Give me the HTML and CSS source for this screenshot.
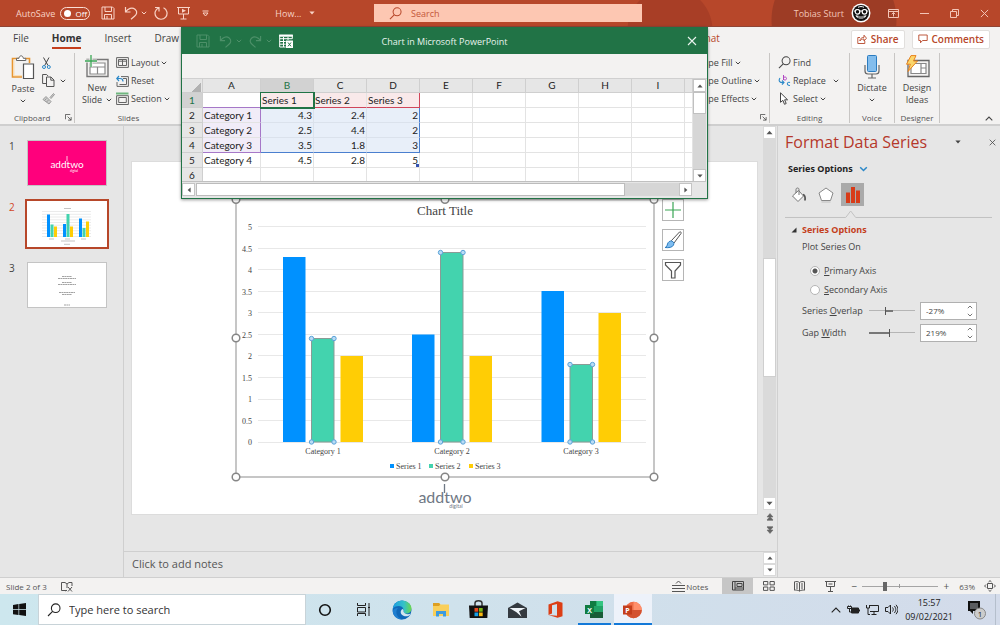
FILE: index.html
```html
<!DOCTYPE html>
<html lang="en">
<head>
<meta charset="utf-8">
<title>PowerPoint</title>
<link rel="stylesheet" href="styles.css">
</head>
<body>
<svg class="defs" aria-hidden="true">
  <symbol id="chev" viewBox="0 0 6 4"><path d="M.8.8 3 3 5.2.8" fill="none" stroke="currentColor"/></symbol>
  <symbol id="tri" viewBox="0 0 6 4"><path d="M.4.4h5.2L3 3.4z" fill="currentColor"/></symbol>
  <symbol id="save" viewBox="0 0 14 14"><path d="M1 1h10.500L13 2.500V13H1zM4 1v4.500h6.500V1M3.500 13V8.500h7V13M6 10v3" fill="none" stroke="currentColor"/></symbol>
  <symbol id="undo" viewBox="0 0 14 14"><path d="M1.500 1v5h5M1.500 6C4 2.500 8 .8 11 3.200c3 2.600 1.500 5.300-.5 7L7 13.300" fill="none" stroke="currentColor" stroke-width="1.200"/></symbol>
  <symbol id="launch" viewBox="0 0 8 8"><path d="M.5 6V.5H6M3 3l4 4M7 3.500V7H3.500" fill="none" stroke="currentColor"/></symbol>
  <symbol id="lens" viewBox="0 0 14 14"><path d="M5.600 8.400 1 13" stroke="currentColor" stroke-width="1.100"/><circle cx="8.700" cy="5.200" r="4.300" fill="none" stroke="currentColor" stroke-width="1.100"/></symbol>
  <symbol id="cross" viewBox="0 0 10 10"><path d="m1 1 8 8M9 1 1 9" stroke="currentColor" stroke-width="1.100"/></symbol>
</svg>
<div class="app">
  <header class="titlebar">
    <div class="tb-left">
      <span class="autosave">AutoSave</span>
      <button class="toggle" aria-label="AutoSave off"><i></i>Off</button>
      <button class="tb-save" aria-label="Save"><svg width="14" height="14"><use href="#save"/></svg></button>
      <button class="tb-undo" aria-label="Undo"><svg width="14" height="14"><use href="#undo"/></svg><svg width="6" height="4"><use href="#chev"/></svg></button>
      <button class="tb-redo" aria-label="Repeat"><svg width="14" height="14" viewBox="0 0 14 14"><path d="M1 1.500h4v4M4.800 1.700A6 6 0 1 0 9.500 1.800" fill="none" stroke="currentColor" stroke-width="1.200"/></svg></button>
      <button class="tb-show" aria-label="Start slide show"><svg width="13" height="14" viewBox="0 0 13 14"><path d="M0 1.500h13M1.500 1.500V8h10V1.500M6.500 8v5M3.500 13h6" fill="none" stroke="currentColor"/><path d="m5 2.800 4 2-4 2z" fill="currentColor"/></svg></button>
      <button class="tb-more" aria-label="Customise toolbar"><svg width="7" height="7" viewBox="0 0 7 7"><path d="M.5 1h6M1 3h5L3.500 6z" fill="none" stroke="currentColor"/></svg></button>
      <span class="docname">How... <svg width="6" height="4"><use href="#tri"/></svg></span>
    </div>
    <label class="search"><svg width="13" height="13"><use href="#lens"/></svg><input type="search" placeholder="Search" aria-label="Search"></label>
    <div class="tb-right">
      <span>Tobias Sturt</span>
      <svg width="20" height="20" viewBox="0 0 20 20"><circle cx="10" cy="10" r="9.500" fill="#fff"/><circle cx="10" cy="10" r="8" fill="#111"/><path d="M3.500 8.500C4 6 8 6 9 8h2c1-2 5-2 5.500.5" stroke="#fff" fill="none"/><circle cx="6.500" cy="8.800" r="2.300" fill="#111" stroke="#fff" stroke-width="1.200"/><circle cx="13.500" cy="8.800" r="2.300" fill="#111" stroke="#fff" stroke-width="1.200"/><path d="M4.500 12c3 1.500 8 1.500 11 0-1 5-10 5-11 0z" fill="#fff"/><path d="M6.500 14h7M8 12.800v2.800M10 13v3M12 12.800v2.800" stroke="#111" stroke-width=".6"/><path d="M7 4.300c2-1 4-1 6 0" stroke="#fff" fill="none"/></svg>
      <button aria-label="Ribbon display options"><svg width="11" height="9" viewBox="0 0 11 9"><path d="M.5.500h10v8H.5zM.5 2.500h10M5.500 7.500v-4M3.700 5.200l1.800-1.700 1.800 1.700" fill="none" stroke="currentColor"/></svg></button>
      <button aria-label="Minimise"><svg width="9" height="9" viewBox="0 0 9 9"><path d="M0 4.500h9" stroke="currentColor"/></svg></button>
      <button aria-label="Restore"><svg width="9" height="9" viewBox="0 0 9 9"><path d="M.5 2.500h6v6h-6zM2.500 2V.5h6v6H7" fill="none" stroke="currentColor"/></svg></button>
      <button aria-label="Close"><svg width="9" height="9"><use href="#cross"/></svg></button>
    </div>
  </header>

  <div class="ribbon">
    <nav class="tabs">
      <button>File</button><button class="on">Home</button><button>Insert</button><button>Draw</button>
      <button class="ctx">Format</button>
      <button class="pill"><svg width="10" height="10" viewBox="0 0 10 10"><path d="M3 3.500H.8v6h7V7M2.800 7c.3-2.500 2-3.700 4.200-3.700V1.200l2.500 3L7 7V5C5.200 5 4 5.500 2.800 7z" fill="none" stroke="currentColor" stroke-width=".9"/></svg>Share</button>
      <button class="pill"><svg width="10" height="10" viewBox="0 0 10 10"><path d="M.8 1h8.400v5.500H4.500l-2 2.300V6.500H.8z" fill="none" stroke="currentColor" stroke-width=".9"/></svg>Comments</button>
    </nav>
    <div class="groups">
      <section class="group g-clip">
        <div class="gbody">
          <button class="big"><svg width="24" height="25" viewBox="0 0 24 25"><path d="M8 3.500H1.500V22H11" fill="none" stroke="#e8952f" stroke-width="1.600"/><path d="M3 5v15.500h8" fill="none" stroke="#fce0b5"/><path d="M14 3.500h4.500V8" fill="none" stroke="#e8952f" stroke-width="1.600"/><path d="M5.500 5.500V3.300H8C8.300 0 12 0 12.300 3.300h2.500v2.200z" fill="#fff" stroke="#666"/><path d="M12.500 9h10v14.500h-10z" fill="#fff" stroke="#555" stroke-width="1.200"/></svg>Paste<svg class="dd" width="6" height="4"><use href="#chev"/></svg></button>
          <div class="col minis">
            <button aria-label="Cut"><svg width="9" height="12" viewBox="0 0 9 12"><path d="M1.500.5 6 8.500M7 .5 2.700 8.500" stroke="#444"/><circle cx="2" cy="10" r="1.500" fill="none" stroke="#2b88c8"/><circle cx="6.800" cy="10" r="1.500" fill="none" stroke="#2b88c8"/></svg></button>
            <button aria-label="Copy"><svg width="13" height="13" viewBox="0 0 13 13"><path d="M4 9.500H.6v-9h4l1.500 1.500M4.500 3h4.500l3 3v6.500H4.500zM8.800 3v3.200H12" fill="none" stroke="#555"/></svg><svg class="dd" width="6" height="4"><use href="#chev"/></svg></button>
            <button aria-label="Format painter"><svg width="13" height="12" viewBox="0 0 13 12"><path d="m8 4.500 3.500-4 1 1-3.500 4zM4 3.500l5 5-2 2.500L1 6.500zM2.500 7.500l2-2M4.500 9l2-2" fill="#ccc" stroke="#999"/></svg></button>
          </div>
        </div>
        <div class="glabel">Clipboard<svg width="7" height="7"><use href="#launch"/></svg></div>
      </section>
      <section class="group g-slides">
        <div class="gbody">
          <button class="big"><svg width="24" height="24" viewBox="0 0 24 24"><path d="M2 4.500h21v17H2z" fill="#f3f2f1" stroke="#777" stroke-width="1.400"/><path d="M5 8h15v11H5zM12.500 12v7M5 12h15" fill="#fff" stroke="#8a8a8a" stroke-width="1.200"/><path d="M6 0v12M0 6h12" stroke="#f3f2f1" stroke-width="3"/><path d="M6 0v12M0 6h12" stroke="#3aa655" stroke-width="1.300"/></svg>New<span>Slide <svg width="6" height="4"><use href="#chev"/></svg></span></button>
          <div class="col">
            <button><svg width="13" height="11" viewBox="0 0 13 11"><path d="M.6.600h11.800v9.800H.6zM2.500 2.500h8v6h-8zM6.500 2.500v6M2.500 4.200h8" fill="none" stroke="#666"/></svg>Layout <svg width="6" height="4"><use href="#chev"/></svg></button>
            <button><svg width="13" height="12" viewBox="0 0 13 12"><path d="M5 1.600h7.400v9.800H1V7M3.500 9.500h7v-6H7" fill="none" stroke="#666"/><path d="M1 3.500h3c2 0 3 1 3 3M3 1 .8 3.500 3 6" fill="none" stroke="#2b88c8" stroke-width="1.200"/></svg>Reset</button>
            <button><svg width="13" height="13" viewBox="0 0 13 13"><path d="M0 .500h12.500v2H0z" fill="#6fb67f"/><path d="M.6 3.700h11.800v8.800H.6zM2.700 5.500h7.600v5H2.700z" fill="none" stroke="#666"/></svg>Section <svg width="6" height="4"><use href="#chev"/></svg></button>
          </div>
        </div>
        <div class="glabel">Slides</div>
      </section>
      <section class="group g-draw">
        <div class="gbody"><div class="col">
          <button>Shape Fill <svg width="6" height="4"><use href="#chev"/></svg></button>
          <button>Shape Outline <svg width="6" height="4"><use href="#chev"/></svg></button>
          <button>Shape Effects <svg width="6" height="4"><use href="#chev"/></svg></button>
        </div></div>
        <div class="glabel"><svg width="7" height="7"><use href="#launch"/></svg></div>
      </section>
      <section class="group g-edit">
        <div class="gbody"><div class="col">
          <button><svg width="13" height="13"><use href="#lens"/></svg>Find</button>
          <button><svg width="13" height="13" viewBox="0 0 13 13"><path d="M5.500 1v5M5.500 4.500c0-2 3-2 3 0s-3 2-3 0" fill="none" stroke="#b146c2"/><path d="M12 8.500c-3-1.500-4 3.300 0 3M2 4C0 7 2 9 5.500 8.500M4 6.500l2 2-2 2.200" fill="none" stroke="#2b88c8" stroke-width="1.100"/></svg>Replace <svg class="far" width="6" height="4"><use href="#chev"/></svg></button>
          <button><svg width="13" height="13" viewBox="0 0 13 13"><path d="M2.500.800v9.500l2.400-2 1.600 4 1.700-.8-1.600-3.700h3z" fill="#fff" stroke="#444"/></svg>Select <svg width="6" height="4"><use href="#chev"/></svg></button>
        </div></div>
        <div class="glabel">Editing</div>
      </section>
      <section class="group g-voice">
        <div class="gbody"><button class="big"><svg width="16" height="24" viewBox="0 0 16 24"><path d="M1 10v6c0 2 1 3 3 3h8c2 0 3-1 3-3v-6M8 19v4M4 23h8" fill="none" stroke="#666" stroke-width="1.200"/><rect x="3.500" y=".5" width="9" height="16" rx="1" fill="#83bdec" stroke="#2b7cc0"/></svg>Dictate<svg class="dd" width="6" height="4"><use href="#chev"/></svg></button></div>
        <div class="glabel">Voice</div>
      </section>
      <section class="group g-design">
        <div class="gbody"><button class="big"><svg width="25" height="24" viewBox="0 0 25 24"><path d="M3 5.500h21v16H3z" fill="#f3f2f1" stroke="#666" stroke-width="1.300"/><path d="M6 8.500h15v10H6zM16 8.500v10M16 13h5" fill="#fff" stroke="#888" stroke-width="1.200"/><path d="M6 .6h5L8.500 6h4L3 16.500l2.300-7.300H1.500z" fill="#fbd66b" stroke="#e8821e"/></svg>Design<span>Ideas</span></button></div>
        <div class="glabel">Designer</div>
      </section>
      <button class="collapse" aria-label="Collapse ribbon"><svg width="8" height="5" viewBox="0 0 8 5"><path d="m.7 4.300 3.300-3.300 3.300 3.300" fill="none" stroke="currentColor" stroke-width="1.100"/></svg></button>
    </div>
  </div>

  <main class="main">
    <aside class="thumbs">
      <div class="thumb"><span>1</span><svg viewBox="0 0 78 44"><rect width="78" height="44" fill="#ff007c"/><text x="39" y="27" class="mini-logo" text-anchor="middle">addtwo</text><path d="M39 15v5" stroke="#fff" stroke-width=".8"/><text x="46" y="31" class="mini-sub" text-anchor="middle">digital</text></svg></div>
      <div class="thumb sel"><span>2</span><svg viewBox="0 0 78 44"><rect width="78" height="44" fill="#fff"/><path d="M14 9.500h49M14 12.300h49M14 15h49M14 17.800h49M14 20.500h49M14 23.200h49M14 26h49M14 28.700h49M14 31.500h49M14 34.500h49" stroke="#ddd" stroke-width=".6"/><path d="M19 12.500h3V35h-3zM35 22h3v13h-3zM51 16.500h3V35h-3z" fill="#0091ff"/><path d="M22.500 22.500h3V35h-3zM38.500 12h3v23h-3zM54.500 26h3v9h-3z" fill="#43d3ae"/><path d="M26 24.500h3V35h-3zM42 24.500h3V35h-3zM58 19.500h3V35h-3z" fill="#ffcd05"/><path d="M36 6.500h7M21 37h5M37 37h5M53 37h5M33 39h14M36 42.300h6" stroke="#aaa" stroke-width=".7"/></svg></div>
      <div class="thumb"><span>3</span><svg viewBox="0 0 78 44"><rect width="78" height="44" fill="#fff"/><path d="M34 13.500h10M30 15.500h18M34 19.500h10M30 21.500h18M31 29.500h16M34 31.500h10M36 42h6" stroke="#999" stroke-width=".9" stroke-dasharray="2 .4"/></svg></div>
    </aside>
    <section class="editor">
      <div class="stage">
        <div class="slide">
          <svg class="chart" viewBox="132 162 625 352" role="img" aria-label="Clustered column chart">
            <path d="M236 199.500H654V477H236z" fill="none" stroke="#c6c6c6" stroke-width="2"/>
            <text x="445" y="215" text-anchor="middle" class="c-title">Chart Title</text>
            <path d="M258 226.500H646M258 248.500H646M258 269.500H646M258 291.500H646M258 312.500H646M258 334.500H646M258 355.500H646M258 377.500H646M258 399.500H646M258 420.500H646M258 442.500H646" stroke="#e8e8e8"/>
            <g class="c-axis" text-anchor="end"><text x="252" y="230">5</text><text x="252" y="252">4.5</text><text x="252" y="273">4</text><text x="252" y="295">3.5</text><text x="252" y="316">3</text><text x="252" y="338">2.5</text><text x="252" y="359">2</text><text x="252" y="381">1.5</text><text x="252" y="402">1</text><text x="252" y="424">0.5</text><text x="252" y="445">0</text></g>
            <g fill="#0091ff"><path d="M283 257h22.500v185H283zM412 334.500h22.500V442H412zM541.500 291h22.500v151h-22.500z"/></g>
            <g fill="#43d3ae" stroke="#8a9b96"><path d="M311.500 338.500H334V442h-22.500zM440.500 252.500H463V442h-22.500zM570 364.500h22.500V442H570z"/></g>
            <g fill="#ffcd05"><path d="M340.500 356H363v86h-22.500zM469.500 356H492v86h-22.500zM598.500 313H621v129h-22.500z"/></g>
            <g fill="#b8dcf5" stroke="#5ba3d9"><circle cx="311.500" cy="338.500" r="2.200"/><circle cx="334" cy="338.500" r="2.200"/><circle cx="311.500" cy="442" r="2.200"/><circle cx="334" cy="442" r="2.200"/><circle cx="440.500" cy="252.500" r="2.200"/><circle cx="463" cy="252.500" r="2.200"/><circle cx="440.500" cy="442" r="2.200"/><circle cx="463" cy="442" r="2.200"/><circle cx="570" cy="364.500" r="2.200"/><circle cx="592.500" cy="364.500" r="2.200"/><circle cx="570" cy="442" r="2.200"/><circle cx="592.500" cy="442" r="2.200"/></g>
            <g class="c-axis" text-anchor="middle"><text x="323" y="454">Category 1</text><text x="452" y="454">Category 2</text><text x="581" y="454">Category 3</text></g>
            <path d="M390 464h4v4h-4z" fill="#0091ff"/><path d="M429 464h4v4h-4z" fill="#43d3ae"/><path d="M469 464h4v4h-4z" fill="#ffcd05"/>
            <g class="c-axis"><text x="396" y="469">Series 1</text><text x="435" y="469">Series 2</text><text x="475" y="469">Series 3</text></g>
            <g fill="#fff" stroke="#868686" stroke-width="1.500"><circle cx="236" cy="199.500" r="3.800"/><circle cx="445" cy="199.500" r="3.800"/><circle cx="654" cy="199.500" r="3.800"/><circle cx="236" cy="338" r="3.800"/><circle cx="654" cy="338" r="3.800"/><circle cx="236" cy="477" r="3.800"/><circle cx="445" cy="477" r="3.800"/><circle cx="654" cy="477" r="3.800"/></g>
            <text x="445" y="503" text-anchor="middle" class="logo">addtwo</text><path d="M444.500 484v9" stroke="#6f7885" stroke-width="1.300"/>
            <text x="456" y="508" text-anchor="middle" class="logo-sub">digital</text>
          </svg>
          <div class="chart-tools">
            <button aria-label="Chart elements"><svg width="18" height="18" viewBox="0 0 18 18"><path d="M9 1v16M1 9h16" stroke="#3aa655" stroke-width="1.200"/></svg></button>
            <button aria-label="Chart styles"><svg width="18" height="18" viewBox="0 0 18 18"><path d="M7.500 9.500 15.500 1c1.500-.5 2 .5 1.500 1.500L10 12z" fill="#fff" stroke="#555"/><path d="M7.500 10c2 .5 3 2 2 4-1 2.500-5 3-8.500 2.500 2-.5 2-2 2.500-3.500C4 11 6 9.700 7.500 10z" fill="#7fbdf0" stroke="#2b7cc0"/></svg></button>
            <button aria-label="Chart filters"><svg width="18" height="18" viewBox="0 0 18 18"><path d="M1.500 1.500h15V4L11 10v7H7.500v-7L1.500 4z" fill="#fff" stroke="#555" stroke-width="1.200"/></svg></button>
          </div>
        </div>
      </div>
      <div class="vscroll">
        <button aria-label="Scroll up"><svg class="flip" width="7" height="5"><use href="#tri"/></svg></button>
        <div class="vtrack"><i></i></div>
        <button aria-label="Scroll down"><svg width="7" height="5"><use href="#tri"/></svg></button>
        <button class="bare" aria-label="Previous slide"><svg width="8" height="8" viewBox="0 0 8 8"><path d="m1 4 3-3.500L7 4zM1 7l3-3.500L7 7zM1 7.500h6" fill="#666" stroke="#666" stroke-width=".5"/></svg></button>
        <button class="bare" aria-label="Next slide"><svg width="8" height="8" viewBox="0 0 8 8"><path d="m1 1 3 3.500L7 1zM1 4l3 3.500L7 4zM1 .500h6" fill="#666" stroke="#666" stroke-width=".5"/></svg></button>
      </div>
      <div class="notes">Click to add notes</div>
      <div class="nscroll">
        <button aria-label="Scroll notes up"><svg class="flip" width="6" height="4"><use href="#tri"/></svg></button>
        <button aria-label="Scroll notes down"><svg width="6" height="4"><use href="#tri"/></svg></button>
      </div>
    </section>
    <aside class="pane">
      <div class="p-head"><h2>Format Data Series</h2><button aria-label="Pane options"><svg width="6" height="4"><use href="#tri"/></svg></button><button aria-label="Close pane"><svg width="7" height="7"><use href="#cross"/></svg></button></div>
      <button class="p-sub">Series Options <svg width="9" height="6"><use href="#chev"/></svg></button>
      <div class="p-icons">
        <button aria-label="Fill and line"><svg width="16" height="16" viewBox="0 0 16 16"><path d="m1.500 9 6-5.500 5 5.500-5.500 5.500z" fill="#fff" stroke="#777"/><path d="M5 6V2.500C5 .5 8 .5 8 2.500V8" fill="none" stroke="#777"/><path d="M12 7.500c2 .5 2.500 2 2 6" fill="none" stroke="#555" stroke-width="1.800"/></svg></button>
        <button aria-label="Effects"><svg width="16" height="16" viewBox="0 0 16 16"><path d="m8 1 7 5-2.500 7.500h-9L1 6z" fill="#fff" stroke="#888"/><path d="M3.500 15h9" stroke="#ccc" stroke-width="1.500"/></svg></button>
        <button class="on" aria-label="Series options"><svg width="16" height="16" viewBox="0 0 16 16"><path d="M1 5.500h4V16H1zM6 0h4v16H6zM11 3.500h4V16h-4z" fill="#d83b18"/></svg></button>
      </div>
      <svg class="p-rule" width="208" height="8" viewBox="0 0 208 8"><path d="M0 7.500h61l5-6.500 5 6.500h137" fill="none" stroke="#c2c2c2"/></svg>
      <h3><svg width="6" height="6" viewBox="0 0 6 6"><path d="M5.500.500v5h-5z" fill="#333"/></svg>Series Options</h3>
      <fieldset>
        <legend>Plot Series On</legend>
        <label><input type="radio" name="axis" checked><span><u>P</u>rimary Axis</span></label>
        <label><input type="radio" name="axis"><span><u>S</u>econdary Axis</span></label>
      </fieldset>
      <div class="prop"><label for="ov">Series <u>O</u>verlap</label><input class="rng centered" type="range" min="-100" max="100" value="-27" aria-label="Series overlap slider"><div class="spin"><input id="ov" type="text" value="-27%"><button aria-label="Change overlap"><svg class="flip" width="6" height="4"><use href="#chev"/></svg><svg width="6" height="4"><use href="#chev"/></svg></button></div></div>
      <div class="prop"><label for="gw">Gap <u>W</u>idth</label><input class="rng filled" type="range" min="0" max="500" value="219" aria-label="Gap width slider"><div class="spin"><input id="gw" type="text" value="219%"><button aria-label="Change gap width"><svg class="flip" width="6" height="4"><use href="#chev"/></svg><svg width="6" height="4"><use href="#chev"/></svg></button></div></div>
    </aside>
  </main>

  <footer class="status">
    <span>Slide 2 of 3</span>
    <button class="spell" aria-label="Spelling"><svg width="12" height="11" viewBox="0 0 12 11"><path d="M6 9.500H.5v-8H4L6 3l2-1.500h3V5M6 3v4M4.500 10l1.500-.8M7 6l4 4.500M11 6l-4 4.500" fill="none" stroke="#555"/></svg></button>
    <button class="notesbtn"><svg width="13" height="12" viewBox="0 0 13 12"><path d="M0 5.500h13M0 8.500h13M0 11.500h13M4 3.500 6.500 1 9 3.500" fill="none" stroke="#555"/></svg>Notes</button>
    <div class="views">
      <button class="on" aria-label="Normal view"><svg width="12" height="10" viewBox="0 0 12 10"><path d="M.5.500h11v8.500H.5zM3 .500v8.500M5 2.500h5v3H5zM3 7h8.500" fill="none" stroke="#444"/></svg></button>
      <button aria-label="Slide sorter"><svg width="12" height="10" viewBox="0 0 12 10"><path d="M.5.500h4.300v3.400H.5zM7 .500h4.300v3.400H7zM.5 6h4.300v3.400H.5zM7 6h4.300v3.400H7z" fill="none" stroke="#555"/></svg></button>
      <button aria-label="Reading view"><svg width="12" height="11" viewBox="0 0 12 11"><path d="M5.500 1.500C4 .3 2 .5.500.8v8.400c1.500-.3 3.500-.3 5 1 1.500-1.300 3.500-1.300 5-1V.8C9 .5 7 .3 5.500 1.500zv8.500M2 3h2M2 5h2M2 7h2M7 3h2M7 5h2M7 7h2" fill="none" stroke="#555"/></svg></button>
      <button aria-label="Slide show"><svg width="11" height="11" viewBox="0 0 11 11"><path d="M0 .500h11M1.500.500v5h8v-5M3.500 3h4M5.500 5.500v5M3 10.500h5" fill="none" stroke="#555"/></svg></button>
    </div>
    <div class="zoom"><button aria-label="Zoom out">−</button><input type="range" min="10" max="400" value="122" aria-label="Zoom"><button aria-label="Zoom in">+</button></div>
    <span class="pct">63%</span>
    <button class="fit" aria-label="Fit slide"><svg width="12" height="12" viewBox="0 0 12 12"><path d="M3.500 3.500h5v5h-5zM4.500 2 6 .6 7.500 2M4.500 10 6 11.400 7.500 10M2 4.500.6 6 2 7.500M10 4.500 11.400 6 10 7.500" fill="none" stroke="#555"/></svg></button>
  </footer>

  <footer class="taskbar">
    <button class="start" aria-label="Start"><svg width="13" height="13" viewBox="0 0 13 13"><path d="M0 2 5.500 1v5.200H0zM6.200.900 13 0v6.200H6.200zM0 6.900h5.500V12L0 11.200zM6.200 6.900H13V13l-6.800-.9z" fill="#111"/></svg></button>
    <label class="wsearch"><svg width="14" height="14"><use href="#lens"/></svg><input type="search" placeholder="Type here to search" aria-label="Windows search"></label>
    <div class="apps">
      <button aria-label="Cortana"><svg width="14" height="14" viewBox="0 0 14 14"><circle cx="7" cy="7" r="5.300" fill="none" stroke="#111" stroke-width="1.600"/></svg></button>
      <button aria-label="Task view"><svg width="14" height="13" viewBox="0 0 14 13"><path d="M.5 0v2.500h8V0M.5 4.500h8v4.500h-8zM.5 13v-2.500h8V13M12 0v3M12 6v7" fill="none" stroke="#222"/><path d="M11 3.500h2v2h-2z" fill="#222"/></svg></button>
      <button aria-label="Edge"><svg width="20" height="20" viewBox="0 0 20 20"><defs><linearGradient id="e1"><stop stop-color="#1b9de2"/><stop offset=".6" stop-color="#35c1c8"/><stop offset="1" stop-color="#6bd84a"/></linearGradient></defs><circle cx="10" cy="10" r="9.500" fill="#1068b8"/><path d="M.7 9C1.500 4 5 .5 10 .5c5.500 0 9.500 4 9.500 8 0 3-2.500 5-5 5-2 0-3.300-.8-3-1.800C12 9 10.500 6 7 6c-3 0-5.500 1.200-6.300 3z" fill="url(#e1)"/><path d="M11.500 11.700c1 2.300 4.500 3.300 7.300 1.700-1.800 3.500-6.300 3.500-8.600 1.600-2.300-2-1.700-4.700.3-6 1.200.5 1.200 1.700 1 2.700z" fill="#d3e5ee"/><path d="M6 8c-3.500 4-1 10.500 5 11.400C5 20 1 16 .7 11 1.500 9 4 7.700 6 8z" fill="#1f7fd0"/></svg></button>
      <button aria-label="File Explorer"><svg width="18" height="16" viewBox="0 0 18 16"><path d="M1 1h6l1.500 1.500H17V14H1z" fill="#f9cf5a"/><path d="M1 1h6l1.300 1.500L7 4H1z" fill="#dd9f22"/><path d="M4 9h10v5.500h-3V12H7v2.500H4z" fill="#3c9be0"/></svg></button>
      <button aria-label="Store"><svg width="19" height="19" viewBox="0 0 19 19"><path d="M6 6V3c0-3 7-3 7 0v3" fill="none" stroke="#333" stroke-width="1.500"/><path d="M0 5.500h19l-.7 12.500H.7z" fill="#111"/><path d="M5.500 8h3.700v3.700H5.500z" fill="#e74b20"/><path d="M10 8h3.700v3.700H10z" fill="#7cb917"/><path d="M5.500 12.500h3.700v3.700H5.500z" fill="#189fe4"/><path d="M10 12.500h3.700v3.700H10z" fill="#fbba12"/></svg></button>
      <button aria-label="Mail"><svg width="19" height="16" viewBox="0 0 19 16"><path d="M0 6 9.500.5 19 6v10H0z" fill="#343a40"/><path d="M1.500 6h16L11 9.200l2.500 5.500-5-4.500z" fill="#eef4f8"/></svg></button>
      <button aria-label="Office"><svg width="15" height="17" viewBox="0 0 15 17"><path d="M.5 3.500 9.500.300l5 1.500v13.500l-5 1.500-9-2.800 8.500.8V3L4 4.200v8.300l-3.500 1.500z" fill="#dc3e15"/></svg></button>
      <button class="run" aria-label="Excel"><svg width="18" height="17" viewBox="0 0 18 17"><path d="M5 0h13v17H5z" fill="#21a366"/><path d="M5 0h6.500v5H5z" fill="#107c41"/><path d="M11.500 0H18v5h-6.500z" fill="#33c481"/><path d="M5 11h13v6H5z" fill="#185c37"/><path d="M0 4h9v9H0z" fill="#107c41"/><text x="4.500" y="11.500" text-anchor="middle" class="tile">X</text></svg></button>
      <button class="run cur" aria-label="PowerPoint"><svg width="19" height="18" viewBox="0 0 19 18"><circle cx="10.500" cy="9" r="8.300" fill="#ed6c47"/><path d="M10.500.7A8.300 8.300 0 0 1 18.800 9h-8.300z" fill="#ff8f6b"/><path d="M2.200 9h16.600a8.300 8.300 0 0 1-16.600 0z" fill="#d35230"/><path d="M0 4.500h9v9H0z" fill="#c43e1c"/><text x="4.500" y="12" text-anchor="middle" class="tile">P</text></svg></button>
    </div>
    <div class="tray">
      <svg width="10" height="6" viewBox="0 0 10 6"><path d="m.7 5.300 4.300-4.300 4.300 4.300" fill="none" stroke="#222" stroke-width="1.100"/></svg>
      <svg width="13" height="10" viewBox="0 0 13 10"><path d="M4.500 3h7v5h-7z" fill="#222" stroke="#222"/><path d="M12.500 4.500v2M.5 1.500h4v2h-4zM2.500 3.500V7h2M1.500.500v1M3.500.500v1" fill="none" stroke="#222"/></svg>
      <svg width="13" height="11" viewBox="0 0 13 11"><path d="M4 1.500h8.500v6H4M8 7.500v3M5.500 10.500h5M.5 1v3h3V1M2 4v6.500h2" fill="none" stroke="#222"/></svg>
      <svg width="13" height="11" viewBox="0 0 13 11"><path d="M.5 3.500H3L5.500 1v9L3 7.500H.5zM7.500 3.500c1 1.300 1 2.700 0 4M9.300 2c2 2.300 2 4.700 0 7M11 .8c2.500 3 2.500 6.400 0 9.400" fill="none" stroke="#222"/></svg>
      <div class="clock"><span>15:57</span><span>09/02/2021</span></div>
      <svg width="20" height="20" viewBox="0 0 20 20"><path d="M1 1h12v10H6v3l-3-3H1z" fill="#111"/><path d="M3 4h8M3 6h8M3 8h8" stroke="#dfe6f0" stroke-width=".7"/><circle cx="13" cy="13.500" r="5.500" fill="#ccc" stroke="#888"/><text x="13" y="17" text-anchor="middle" class="badge">1</text></svg>
    </div>
  </footer>

  <div class="xl" role="dialog" aria-label="Chart in Microsoft PowerPoint">
    <div class="xl-title">
      <div class="xl-tools"><svg width="14" height="14"><use href="#save"/></svg><svg class="u" width="13" height="13"><use href="#undo"/></svg><svg width="6" height="4"><use href="#chev"/></svg><svg class="mir u2" width="13" height="13"><use href="#undo"/></svg><svg width="6" height="4"><use href="#chev"/></svg><svg class="wht" width="14" height="14" viewBox="0 0 14 14"><path d="M.7 2h12.600M.7 1v12h6M.7 4.700h12.600V1M.7 7.500h6M.7 10.200h6M4.500 3v10M9 3v3" fill="none" stroke="currentColor"/><path d="M.2.500h13.600v2H.2z" fill="#fff"/><path d="M7 6.500h7V14H7z" fill="#fff"/><path d="m9 8.500 3 3.800M12 8.500l-3 3.800" stroke="#217346"/></svg></div>
      <span>Chart in Microsoft PowerPoint</span>
      <button aria-label="Close"><svg width="10" height="10"><use href="#cross"/></svg></button>
    </div>
    <div class="xl-bar"></div>
    <div class="xl-grid">
      <table>
        <colgroup><col class="w-h"><col class="w-a"><col><col><col><col><col><col><col><col><col class="w-z"></colgroup>
        <thead><tr><th class="corner"></th><th>A</th><th class="hot">B</th><th>C</th><th>D</th><th>E</th><th>F</th><th>G</th><th>H</th><th>I</th><th></th></tr></thead>
        <tbody>
          <tr><th class="hot">1</th><td class="a1"></td><td class="ser act">Series 1</td><td class="ser">Series 2</td><td class="ser end">Series 3</td><td></td><td></td><td></td><td></td><td></td><td></td></tr>
          <tr><th>2</th><td class="cat">Category 1</td><td class="val">4.3</td><td class="val">2.4</td><td class="val end">2</td><td></td><td></td><td></td><td></td><td></td><td></td></tr>
          <tr><th>3</th><td class="cat">Category 2</td><td class="val">2.5</td><td class="val">4.4</td><td class="val end">2</td><td></td><td></td><td></td><td></td><td></td><td></td></tr>
          <tr><th>4</th><td class="cat low">Category 3</td><td class="val low">3.5</td><td class="val low">1.8</td><td class="val low end">3</td><td></td><td></td><td></td><td></td><td></td><td></td></tr>
          <tr><th>5</th><td>Category 4</td><td class="num">4.5</td><td class="num">2.8</td><td class="num grip">5</td><td></td><td></td><td></td><td></td><td></td><td></td></tr>
          <tr class="last"><th>6</th><td></td><td></td><td></td><td></td><td></td><td></td><td></td><td></td><td></td><td></td></tr>
        </tbody>
      </table>
      <div class="xl-v"><button aria-label="Scroll up"><svg class="flip" width="6" height="4"><use href="#tri"/></svg></button><div class="xt"><i></i></div><button aria-label="Scroll down"><svg width="6" height="4"><use href="#tri"/></svg></button></div>
    </div>
    <div class="xl-h"><button aria-label="Scroll left"><svg class="lft" width="6" height="4"><use href="#tri"/></svg></button><div class="xh"><i></i></div><button aria-label="Scroll right"><svg class="rgt" width="6" height="4"><use href="#tri"/></svg></button></div>
  </div>
</div>
</body>
</html>
```
FILE: styles.css
```css
* { box-sizing: border-box; }
body { margin: 0; font-family: "Open Sans", "Noto Sans", sans-serif; font-size: 9px; color: #444; }
button, input { font: inherit; color: inherit; border: 0; background: none; padding: 0; margin: 0; }
button { display: flex; align-items: center; justify-content: center; white-space: nowrap; }
svg { display: block; flex: none; }
input { outline: 0; min-width: 0; }
.defs { position: absolute; width: 0; height: 0; }
.flip { transform: rotate(180deg); }
.lft { transform: rotate(90deg); }
.rgt { transform: rotate(-90deg); }
.mir { transform: scaleX(-1); }
.app { position: relative; display: flex; flex-direction: column; min-height: 100vh; background: #e6e6e6; }

/* title bar */
.titlebar { display: grid; grid-template-columns: 374px 1fr 358px; align-items: center; height: 27px; color: #f9d3c6; border-bottom: 1px solid #8f4535;
  background: radial-gradient(circle at 834px 20px, #9d3c25 0 62px, transparent 63px), radial-gradient(circle at 670px 30px, #a83e26 0 42px, transparent 43px), #b7472a; }
.tb-left { display: flex; align-items: center; padding-left: 16px; }
.toggle { width: 30px; height: 13px; margin: 0 11px 0 5px; border: 1px solid #fbe0d7; border-radius: 7px; font-size: 8px; gap: 5px; color: #fff; }
.toggle i { width: 7px; height: 7px; border-radius: 50%; background: #fff; }
.tb-undo { margin-left: 9px; gap: 3px; }
.tb-redo { margin-left: 7px; }
.tb-show { margin-left: 9px; }
.tb-more { margin-left: 12px; }
.docname { display: flex; align-items: center; gap: 8px; margin-left: 66px; }
.search { display: flex; align-items: center; gap: 9px; height: 18px; padding-left: 15px; background: #fdc7b2; color: #b7472a; }
.search input { flex: 1; }
.search input::placeholder { color: #c4573a; opacity: 1; }
.tb-right { display: flex; align-items: center; justify-content: flex-end; padding-right: 11px; color: #f3c5b7; }
.tb-right > svg { margin: 0 17px 0 7px; }
.tb-right button + button { margin-left: 21px; }

/* ribbon */
.ribbon { background: #f3f2f1; border-bottom: 2px solid #cfcfcf; }
.tabs { display: flex; height: 24px; align-items: center; padding: 0 10px 0 13px; font-size: 10px; }
.tabs button { height: 20px; border-bottom: 2px solid transparent; }
.tabs button + button { margin-left: 23px; }
.tabs .on { font-weight: 700; border-color: #c43e1c; color: #333; }
.tabs .ctx { margin-left: auto !important; margin-right: 108px; color: #b7472a; }
.tabs .pill { height: 19px; padding: 0 5px; gap: 4px; background: #fff; border: 1px solid #e1dfdd; border-radius: 2px; color: #b7472a; font-weight: 600; }
.tabs .pill + .pill { margin-left: 7px; }
.groups { display: flex; height: 73px; padding: 2px 0 1px; }
.group { display: flex; flex-direction: column; border-right: 1px solid #c8c6c4; }
.gbody { display: flex; flex: 1; }
.glabel { display: flex; justify-content: center; align-items: center; height: 12px; font-size: 8px; color: #555; }
.col { display: flex; flex-direction: column; gap: 5px; padding-top: 3px; }
.col button { justify-content: flex-start; gap: 2px; height: 13px; }
.big { flex-direction: column; justify-content: flex-start; padding-top: 2px; line-height: 12px; }
.big > svg:first-child { margin-bottom: 3px; }
.big .dd { margin-top: 4px; }
.big span { display: flex; align-items: center; gap: 4px; }
.g-clip { width: 75px; }
.g-clip .gbody { padding-left: 11px; gap: 7px; }
.g-clip .glabel { justify-content: space-between; padding: 0 2px 0 14px; }
.minis .dd { margin-left: 3px; }
.g-slides { width: 107px; border: 0; }
.g-slides .gbody { padding-left: 7px; gap: 4px; }
.g-draw { flex: 1; }
.g-draw .gbody { justify-content: flex-end; padding-right: 9px; }
.g-draw .glabel { justify-content: flex-end; padding-right: 2px; }
.g-edit { width: 80px; }
.g-edit .gbody { padding-left: 8px; }
.far { margin-left: 5px; }
.g-voice, .g-design { width: 45px; }
.g-voice .gbody, .g-design .gbody { justify-content: center; }
.collapse { width: 60px; align-items: flex-end; padding: 0 0 2px 38px; }

/* workspace */
.main { flex: 1; display: grid; grid-template-columns: 124px 1fr 222px; }
.thumbs { border-right: 1px solid #cfcfcf; padding: 12px 10px 0 6px; }
.thumb { display: grid; grid-template-columns: 19px 1fr; margin-bottom: 11px; font-size: 10px; }
.thumb > span { padding: 1px 3px; }
.thumb svg { width: 80px; margin: 2px; border: 1px solid #c4c4c4; }
.sel { color: #d24726; }
.thumb.sel svg { width: 84px; margin: 0; border: 2px solid #b7472a; padding: 1px; background: #fff; }
.editor { display: grid; grid-template-columns: 1fr 14px; grid-template-rows: 1fr 26px; border-right: 1px solid #d0d0d0; }
.stage { padding: 36px 6px 30px 8px; }
.slide { position: relative; background: #fff; outline: 1px solid #dcdcdc; }
.chart { width: 100%; height: auto; }
.c-title, .c-axis { font-family: "Liberation Serif", serif; fill: #444; }
.c-title { font-size: 13px; }
.c-axis { font-size: 8px; }
.logo, .logo-sub, .mini-logo, .mini-sub { font-family: Lato, sans-serif; fill: #6f7885; }
.logo { font-size: 16px; }
.logo-sub { font-size: 5px; }
.mini-logo { font-size: 10px; fill: #fff; }
.mini-sub { font-size: 3px; fill: #fff; }
.chart-tools { position: absolute; top: 37px; right: 73px; display: flex; flex-direction: column; gap: 8px; }
.chart-tools button { width: 22px; height: 22px; background: #fff; border: 1px solid #b5b5b5; }
.vscroll { display: flex; flex-direction: column; }
.vscroll button, .nscroll button { width: 13px; height: 13px; background: #fff; color: #555; border: 1px solid #dadada; }
.vtrack { flex: 1; background: #dadada; margin-right: 1px; padding-top: 119px; max-height: 358px; }
.vtrack i { display: block; height: 119px; background: #fff; border: 1px solid #cfcfcf; }
.vscroll .bare { background: none; border: 0; }
.notes, .nscroll { border-top: 1px solid #cfcfcf; }
.notes { padding: 0 8px; font-size: 11px; line-height: 24px; color: #555; }
.nscroll button { height: 12px; }

/* format pane */
.pane { padding: 6px 8px 0 7px; }
.p-head { display: flex; align-items: center; padding-right: 4px; }
.p-head h2 { flex: 1; margin: 0; font-size: 16px; line-height: 20px; font-weight: 400; white-space: nowrap; color: #b5382a; }
.p-head button { margin-left: 28px; }
.p-sub { margin: 9px 0 0 3px; gap: 6px; font-weight: 700; color: #222; line-height: 16px; }
.p-sub svg { color: #2b88c8; }
.p-icons { display: flex; gap: 4px; margin: 6px 0 4px 2px; }
.p-icons button { width: 23px; height: 23px; }
.p-icons .on { background: #aaa; }
.p-rule { max-width: 100%; }
.pane h3 { display: flex; align-items: center; gap: 5px; margin: 4px 0 0 6px; font-size: 9px; line-height: 16px; color: #c43e1c; }
fieldset { border: 0; margin: 0; padding: 0 0 0 17px; }
legend { padding: 0; line-height: 18px; margin-bottom: 5px; }
fieldset label { display: flex; align-items: center; gap: 4px; line-height: 19px; padding-left: 8px; }
input[type=radio] { appearance: none; width: 10px; height: 10px; border: 1px solid #b5b5b5; border-radius: 50%; background: #fff; }
input[type=radio]:checked { background: radial-gradient(circle, #555 0 2px, #fff 3px); }
.prop { display: grid; grid-template-columns: 67px 46px 56px; align-items: center; padding-left: 17px; margin-top: 1px; height: 21px; }
.prop .spin { margin-left: 5px; width: 57px; }
.rng, .zoom input { appearance: none; width: 100%; height: 10px; background: linear-gradient(#b5b5b5, #b5b5b5) center / 100% 1px no-repeat; }
.rng.centered { background: linear-gradient(#777, #777) 17px center / 7px 2px no-repeat, linear-gradient(#b5b5b5, #b5b5b5) center / 100% 1px no-repeat; }
.rng.filled { background: linear-gradient(#777, #777) left center / 44% 2px no-repeat, linear-gradient(#b5b5b5, #b5b5b5) center / 100% 1px no-repeat; }
.rng::-webkit-slider-thumb { appearance: none; width: 1px; height: 8px; background: #555; }
.spin { display: flex; height: 18px; background: #fff; border: 1px solid #b0b0b0; font-size: 8px; }
.spin input { flex: 1; padding-left: 5px; }
.spin button { flex-direction: column; gap: 4px; width: 13px; color: #777; }

/* status bar */
.status { display: flex; align-items: center; height: 17px; padding: 0 4px 0 6px; background: #f3f2f1; border-top: 1px solid #cfcfcf; font-size: 8px; color: #555; }
.spell { margin-left: 14px; }
.notesbtn { margin-left: auto; gap: 1px; }
.views { display: flex; height: 16px; margin-left: 14px; }
.views button { width: 31px; }
.views .on { background: #c6c6c6; }
.zoom { display: flex; align-items: center; gap: 4px; margin-left: 4px; }
.zoom button { width: 8px; font-size: 10px; }
.zoom input { width: 76px; background: linear-gradient(#999, #999) 37px center / 1px 4px no-repeat, linear-gradient(#a5a5a5, #a5a5a5) center / 100% 1px no-repeat; }
.zoom input::-webkit-slider-thumb { appearance: none; width: 4px; height: 9px; background: #666; }
.pct { margin-left: 9px; }
.fit { margin-left: 9px; }

/* Windows taskbar */
.taskbar { display: flex; height: 31px; background: linear-gradient(90deg, #cde7ee, #cfe2ec 45%, #d3dbea); color: #222; }
.start { width: 38px; }
.wsearch { display: flex; align-items: center; gap: 8px; width: 268px; padding-left: 8px; background: #fff; border: 1px solid #c8d3d8; font-size: 11px; }
.wsearch input { flex: 1; }
.wsearch input::placeholder { color: #333; opacity: 1; }
.apps { display: grid; grid-template-columns: repeat(9, 1fr); width: 346px; }
.apps .run { border-bottom: 2px solid #1379d8; margin: 0 3px; padding-top: 2px; }
.apps .cur { background: #edf2fa; margin: 0; }
.tile { font: 700 7px "Open Sans", sans-serif; fill: #fff; }
.tray { display: flex; align-items: center; gap: 6px; margin-left: auto; margin-right: 4px; padding-right: 8px; border-right: 1px solid #b5bfcc; }
.clock { display: flex; flex-direction: column; align-items: center; line-height: 14px; font-size: 9px; margin: 0 8px 0 1px; }
.badge { font: 8px "Open Sans", sans-serif; fill: #222; }

/* floating datasheet window */
.xl { position: absolute; left: 181px; top: 27px; width: 527px; background: #e6e6e6; border: 1px solid #217346; box-shadow: 0 1px 3px #0006; }
.xl-title { display: grid; grid-template-columns: 1fr auto 1fr; align-items: center; height: 26px; background: #217346; color: #e9f4ee; font-size: 9px; }
.xl-title > button { justify-self: end; padding-right: 10px; }
.xl-tools { display: flex; align-items: center; gap: 4px; padding-left: 14px; color: #4d9069; }
.xl-tools .u { margin-left: 5px; }
.xl-tools .u2 { margin-left: 3px; }
.xl-tools .wht { margin-left: 3px; color: #fff; }
.xl-bar { height: 25px; background: #f3f2f1; border-bottom: 1px solid #d0d0d0; }
.xl-grid { display: grid; grid-template-columns: 1fr 14px; }
table { width: 100%; table-layout: fixed; border-spacing: 0; border-collapse: separate; background: #fff; font-family: Lato, "Open Sans", sans-serif; font-size: 10px; color: #222; border-bottom: 1px solid #c0c0c0; }
.w-h { width: 21px; }
.w-a { width: 58px; }
.w-z { width: 8px; }
th, td { height: 15px; line-height: 14px; padding: 0 1px; border: solid #e3e3e3; border-width: 0 1px 1px 0; white-space: nowrap; overflow: hidden; }
th { background: #e6e6e6; font-weight: 400; border-color: #cfcfcf; text-align: center; }
thead th { height: 14px; line-height: 13px; }
.last th, .last td { height: 13px; line-height: 12px; border-bottom: 0; }
th.hot { background: #d2d2d2; color: #217346; }
.corner { background: linear-gradient(135deg, transparent 55%, #b2b2b2 56%) 8px 2px / 11px 11px no-repeat #e6e6e6; }
.a1 { border-bottom-color: #a678c8; }
.ser { background: #f9e9ea; border-bottom-color: #d0455a; }
.ser.end { border-right-color: #d0455a; }
.act { outline: 1px solid #217346; outline-offset: 0; border-color: #217346; }
.cat { background: #f1ecf8; border-right-color: #a678c8; }
.cat.low { border-bottom-color: #a678c8; }
.val { background: #e8eff9; text-align: right; border-color: #dbe2ec; }
.val.low { border-bottom-color: #4a7fcf; }
.val.end { border-right-color: #4a7fcf; }
.num { text-align: right; }
.grip { background: linear-gradient(#3552b0, #3552b0) right bottom / 3px 3px no-repeat; }
.xl-v { display: flex; flex-direction: column; }
.xl-v button, .xl-h button { width: 13px; height: 13px; background: #fff; border: 1px solid #c4c4c4; color: #555; }
.xt { flex: 1; background: #d6d6d6; margin-right: 1px; }
.xt i { display: block; height: 22px; background: #fff; border: 1px solid #c0c0c0; }
.xl-h { display: flex; padding: 1px 15px 2px 0; }
.xh { flex: 1; background: #d6d6d6; padding-right: 54px; margin-left: 1px; }
.xh i { display: block; height: 13px; background: #fff; border: 1px solid #bcbcbc; }
```
